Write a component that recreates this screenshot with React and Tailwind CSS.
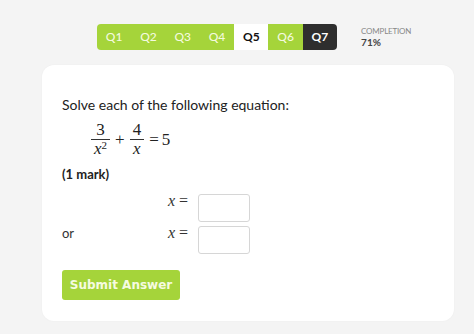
import React from 'react';

const questions = ['Q1', 'Q2', 'Q3', 'Q4', 'Q5', 'Q6', 'Q7'];

const Frac = ({ num, den }) => (
  <span className="inline-flex flex-col items-center align-middle mx-[2px]">
    <span className="px-[3px] leading-[18px]">{num}</span>
    <span className="self-stretch h-px bg-[#333]"></span>
    <span className="px-[3px] leading-[18px] italic">{den}</span>
  </span>
);

const Answer = ({ label }) => (
  <div className="flex items-start h-[28px]">
    <div className="w-[106px] text-[13px] leading-[14px] text-[#333]">{label}</div>
    <div className="w-[30px] text-[16px] leading-[14px] text-[#333]" style={{ fontFamily: '"Liberation Serif", serif' }}>
      <span className="italic">x</span> =
    </div>
    <input className="w-[52px] h-[28px] border border-[#d6d6d6] rounded-[3px] bg-white outline-none" />
  </div>
);

export default function App() {
  return (
    <div className="w-[474px] h-[334px] bg-[#f4f4f4] overflow-hidden" style={{ fontFamily: 'Lato, "Noto Sans", sans-serif' }}>
      <div className="flex items-center pt-[24px] pl-[97px]">
        <div className="flex h-[26px] rounded-[4px] overflow-hidden">
          {questions.map((q) => (
            <div
              key={q}
              className={
                q === 'Q5'
                  ? 'w-[34.3px] flex items-center justify-center text-[12px] font-bold bg-white text-[#111]'
                  : q === 'Q7'
                  ? 'w-[34.3px] flex items-center justify-center text-[12px] font-bold bg-[#2e2e2e] text-white'
                  : 'w-[34.3px] flex items-center justify-center text-[12px] font-medium bg-[#a5d43a] text-[#f4fadf]'
              }
            >
              {q}
            </div>
          ))}
        </div>
        <div className="ml-[24px] flex flex-col leading-none">
          <span className="text-[8px] text-[#888] tracking-tight">COMPLETION</span>
          <span className="text-[10px] font-bold text-[#444] mt-[2px]">71%</span>
        </div>
      </div>

      <div className="ml-[42px] mt-[15px] w-[412px] h-[256px] bg-white rounded-[12px] pl-[20px] pt-[31px] shadow-[0_0_2px_rgba(0,0,0,0.04)]">
        <p className="text-[14px] text-[#222] leading-[18px]">Solve each of the following equation:</p>
        <div className="ml-[27px] mt-[7px] flex items-center text-[17px] text-[#222]" style={{ fontFamily: '"Liberation Serif", serif' }}>
          <Frac num="3" den={<>x<sup className="not-italic text-[11px]">2</sup></>} />
          <span className="mx-[3px]">+</span>
          <Frac num="4" den="x" />
          <span className="mx-[3px]">=</span>
          <span>5</span>
        </div>
        <p className="mt-[7px] text-[13px] font-bold text-[#222]">(1 mark)</p>
        <div className="mt-[9px] flex flex-col gap-[4px]">
          <Answer label="" />
          <Answer label="or" />
        </div>
        <button className="mt-[16px] w-[118px] h-[30px] rounded-[3px] bg-[#a5d43a] text-[12px] font-bold text-[#f6fbe0]" style={{ fontFamily: '"DejaVu Sans", sans-serif' }}>
          Submit Answer
        </button>
      </div>
    </div>
  );
}
